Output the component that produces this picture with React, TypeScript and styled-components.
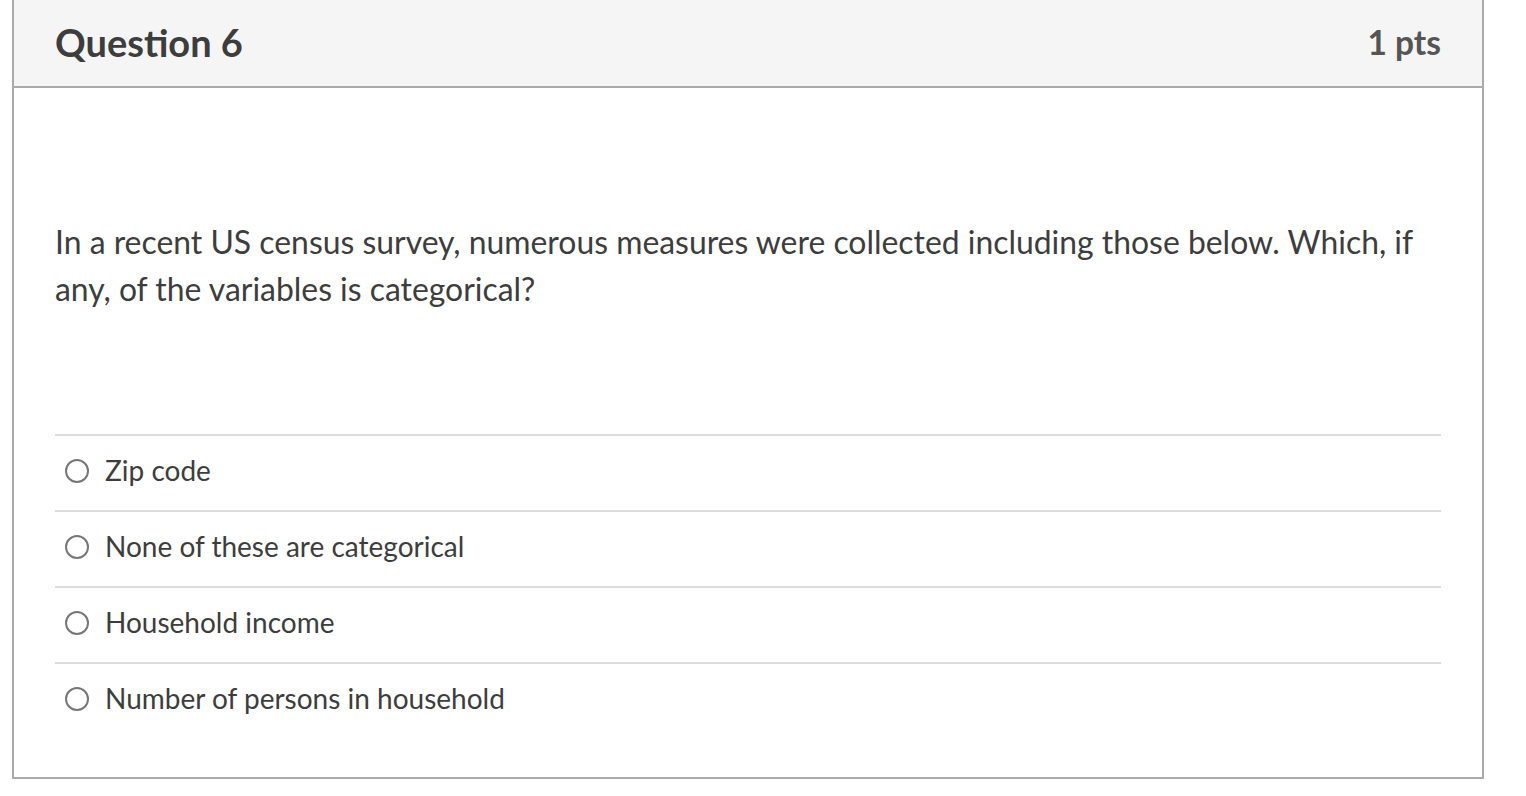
import styled, { createGlobalStyle } from "styled-components";

const ANSWERS = [
  "Zip code",
  "None of these are categorical",
  "Household income",
  "Number of persons in household",
];

const GlobalStyle = createGlobalStyle`
  body {
    margin: 0;
    background: #fff;
    font-family: Lato, "Open Sans", sans-serif;
  }
`;

const App = () => {
  return (
    <Page>
      <GlobalStyle />
      <QuestionCard>
        <Header>
          <Title>Question 6</Title>
          <Points>1 pts</Points>
        </Header>
        <Body>
          <Prompt>
            In a recent US census survey, numerous measures were collected including those below. Which, if
            any, of the variables is categorical?
          </Prompt>
          <AnswerList>
            {ANSWERS.map((answer) => (
              <AnswerRow key={answer}>
                <Radio />
                <AnswerText>{answer}</AnswerText>
              </AnswerRow>
            ))}
          </AnswerList>
        </Body>
      </QuestionCard>
    </Page>
  );
};

export default App;

const Page = styled.div`
  padding: 0 42px 16px 12px;
`;

const QuestionCard = styled.div`
  border: 2px solid #aaaaaa;
  border-top: none;
  background: #fff;
`;

const Header = styled.div`
  display: flex;
  align-items: center;
  justify-content: space-between;
  height: 88px;
  padding: 0 41px 2px 41px;
  background: #f5f5f5;
  border-bottom: 2px solid #aaaaaa;
  box-sizing: border-box;
`;

const Title = styled.h2`
  margin: 0;
  font-size: 38px;
  font-weight: 700;
  color: #3d3d3d;
`;

const Points = styled.div`
  font-size: 33.5px;
  font-weight: 700;
  color: #555555;
`;

const Body = styled.div`
  padding: 131px 41px 39px 41px;
`;

const Prompt = styled.p`
  margin: 0 0 121px 0;
  font-size: 31.9px;
  line-height: 47px;
  color: #3d3d3d;
`;

const AnswerList = styled.div`
  display: flex;
  flex-direction: column;
`;

const AnswerRow = styled.div`
  display: flex;
  align-items: center;
  gap: 16px;
  height: 76px;
  box-sizing: border-box;
  padding: 0 10px 6px 10px;
  border-top: 2px solid #dddddd;
`;

const Radio = styled.span`
  width: 24px;
  height: 24px;
  border: 2px solid #777777;
  border-radius: 50%;
  box-sizing: border-box;
  flex-shrink: 0;
  margin-top: 2px;
`;

const AnswerText = styled.span`
  font-size: 28px;
  color: #3d3d3d;
`;
